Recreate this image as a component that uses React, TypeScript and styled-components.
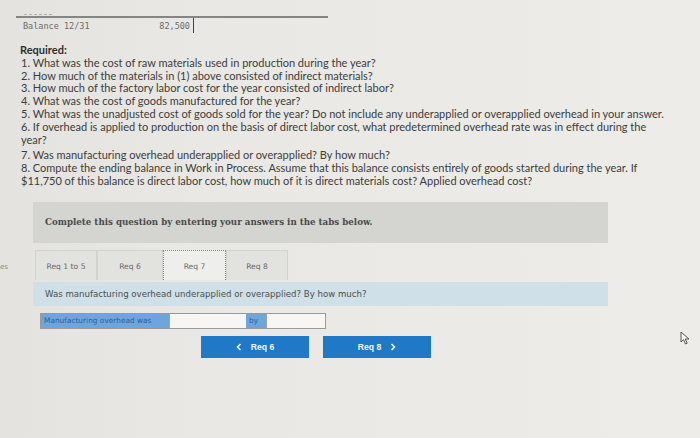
import React from "react";
import styled, { createGlobalStyle } from "styled-components";

const Global = createGlobalStyle`
  html, body { margin: 0; padding: 0; }
  body {
    width: 700px;
    height: 438px;
    overflow: hidden;
    background: linear-gradient(90deg, #e4e3df 0%, #e9e8e4 30%, #edece8 100%);
    position: relative;
  }
`;

const Page = styled.div`
  display: flex;
  flex-direction: column;
  padding-top: 16px;
  width: 700px;
`;

/* ledger fragment at the top */
const Ledger = styled.div`
  margin-left: 16px;
  width: 312px;
  border-top: 2px solid #858583;
  display: flex;
  position: relative;
  height: 15px;
`;

const LedgerDash = styled.div`
  position: absolute;
  left: 8px;
  top: -4px;
  width: 28px;
  border-top: 1px dashed #b0b0ae;
`;

const LedgerLabel = styled.span`
  font-family: "DejaVu Sans Mono", "Liberation Mono", monospace;
  font-size: 8.5px;
  color: #6b6b6b;
  padding-left: 7px;
  padding-top: 3px;
  width: 113px;
`;

const LedgerAmount = styled.span`
  font-family: "DejaVu Sans Mono", "Liberation Mono", monospace;
  font-size: 8.5px;
  color: #6b6b6b;
  width: 54px;
  text-align: right;
  padding-top: 3px;
  padding-right: 3px;
  border-right: 1.5px solid #444;
`;

const Required = styled.div`
  margin: 11px 0 0 20px;
  font-family: "Lato", "Open Sans", sans-serif;
  font-size: 11px;
  line-height: 12.8px;
  color: #3c3c3c;
  white-space: nowrap;
`;

const RequiredTitle = styled.div`
  font-weight: 700;
  color: #2e2e2e;
`;

const Item = styled.div<{ $gap?: boolean }>`
  padding-left: 1px;
  margin-top: ${(p) => (p.$gap ? "3px" : "0")};
`;

const Work = styled.div`
  display: grid;
  grid-template-columns: 33px 575px;
  margin-top: 14px;
`;

const Gutter = styled.div`
  display: flex;
  align-items: flex-end;
  padding-bottom: 9px;
  font-family: "DejaVu Sans", sans-serif;
  font-size: 7px;
  color: #8a8a8a;
`;

const Banner = styled.div`
  grid-column: 2;
  height: 41px;
  background: #d4d4d1;
  display: flex;
  align-items: center;
  padding-left: 12px;
  font-family: "DejaVu Serif", "Liberation Serif", serif;
  font-weight: 700;
  font-size: 8.7px;
  color: #4a4a4a;
`;

const Tabs = styled.div`
  display: flex;
  margin-top: 7px;
  margin-left: 2px;
  height: 30px;
`;

const Tab = styled.div<{ $active?: boolean; $w: number }>`
  width: ${(p) => p.$w}px;
  box-sizing: border-box;
  display: flex;
  align-items: center;
  justify-content: center;
  padding-top: 3px;
  font-family: "DejaVu Sans", sans-serif;
  font-size: 7.6px;
  color: #6a6a6a;
  background: ${(p) => (p.$active ? "#eeeeec" : "#e2e2df")};
  border: ${(p) => (p.$active ? "1px dotted #8a8a8a" : "1px solid #d2d2cf")};
  border-bottom: none;
`;

const Question = styled.div`
  grid-column: 2;
  height: 24px;
  margin-top: 2px;
  background: #cfe0e8;
  display: flex;
  align-items: center;
  padding-left: 12px;
  font-family: "DejaVu Sans", sans-serif;
  font-size: 8.6px;
  color: #4d4d4d;
`;

const AnswerRow = styled.div`
  grid-column: 2;
  margin: 7px 0 0 7px;
  display: flex;
  width: 286px;
  height: 16px;
  border: 1px solid #9a9a9a;
  box-sizing: border-box;
`;

const Cell = styled.div<{ $w: number; $kind: "label" | "input" }>`
  width: ${(p) => p.$w}px;
  box-sizing: border-box;
  background: ${(p) => (p.$kind === "label" ? "#6da5dc" : "#f6f6f4")};
  border-left: ${(p) => (p.$kind === "input" ? "1px solid #9aa4ae" : "none")};
  font-family: "DejaVu Sans", sans-serif;
  font-size: 7.4px;
  color: #2f5f95;
  display: flex;
  align-items: center;
  padding-left: 3px;
`;

const Nav = styled.div`
  grid-column: 2;
  display: flex;
  gap: 14px;
  margin: 7px 0 0 168px;
`;

const NavButton = styled.div`
  width: 108px;
  height: 22px;
  background: #2079c7;
  color: #f2f6fa;
  display: flex;
  align-items: center;
  justify-content: center;
  gap: 9px;
  font-family: "Liberation Sans", Arial, sans-serif;
  font-weight: 700;
  font-size: 8.6px;
`;

const Chevron = styled.svg`
  display: block;
`;

const Pointer = styled.svg`
  position: absolute;
  left: 680px;
  top: 331px;
`;

const Left = () => (
  <Chevron width="6" height="8" viewBox="0 0 6 8">
    <path d="M4.5 1 L1.5 4 L4.5 7" fill="none" stroke="#f2f6fa" strokeWidth="1.6" />
  </Chevron>
);

const Right = () => (
  <Chevron width="6" height="8" viewBox="0 0 6 8">
    <path d="M1.5 1 L4.5 4 L1.5 7" fill="none" stroke="#f2f6fa" strokeWidth="1.6" />
  </Chevron>
);

export default function App() {
  return (
    <>
      <Global />
      <Page>
        <Ledger>
          <LedgerDash />
          <LedgerLabel>Balance 12/31</LedgerLabel>
          <LedgerAmount>82,500</LedgerAmount>
        </Ledger>

        <Required>
          <RequiredTitle>Required:</RequiredTitle>
          <Item>1. What was the cost of raw materials used in production during the year?</Item>
          <Item>2. How much of the materials in (1) above consisted of indirect materials?</Item>
          <Item>3. How much of the factory labor cost for the year consisted of indirect labor?</Item>
          <Item>4. What was the cost of goods manufactured for the year?</Item>
          <Item>
            5. What was the unadjusted cost of goods sold for the year? Do not include any underapplied or
            overapplied overhead in your answer.
          </Item>
          <Item>
            6. If overhead is applied to production on the basis of direct labor cost, what predetermined
            overhead rate was in effect during the
            <br />
            year?
          </Item>
          <Item $gap>7. Was manufacturing overhead underapplied or overapplied? By how much?</Item>
          <Item>
            8. Compute the ending balance in Work in Process. Assume that this balance consists entirely of
            goods started during the year. If
            <br />
            $11,750 of this balance is direct labor cost, how much of it is direct materials cost? Applied
            overhead cost?
          </Item>
        </Required>

        <Work>
          <Banner>Complete this question by entering your answers in the tabs below.</Banner>

          <Gutter>es</Gutter>
          <Tabs>
            <Tab $w={62}>Req 1 to 5</Tab>
            <Tab $w={66}>Req 6</Tab>
            <Tab $w={63} $active>Req 7</Tab>
            <Tab $w={62}>Req 8</Tab>
          </Tabs>

          <Question>Was manufacturing overhead underapplied or overapplied? By how much?</Question>

          <AnswerRow>
            <Cell $w={128} $kind="label">Manufacturing overhead was</Cell>
            <Cell $w={77} $kind="input" />
            <Cell $w={20} $kind="label">by</Cell>
            <Cell $w={59} $kind="input" />
          </AnswerRow>

          <Nav>
            <NavButton>
              <Left />
              Req 6
            </NavButton>
            <NavButton>
              Req 8
              <Right />
            </NavButton>
          </Nav>
        </Work>
      </Page>
      <Pointer width="12" height="14" viewBox="0 0 12 14">
        <path d="M1 1 L1 11 L3.5 8.6 L5.5 13 L7.2 12.2 L5.3 8 L9 8 Z" fill="#f4f4f4" stroke="#555" strokeWidth="1" />
      </Pointer>
    </>
  );
}
